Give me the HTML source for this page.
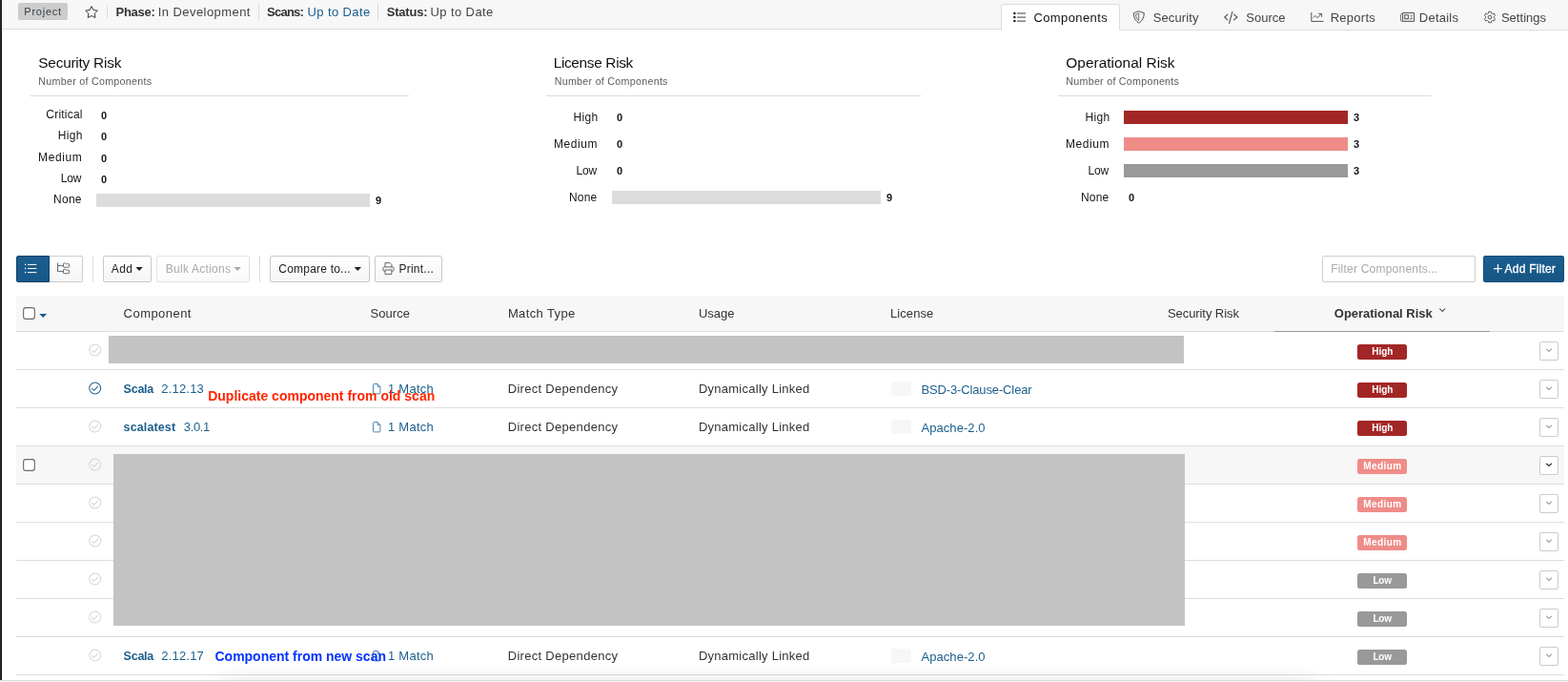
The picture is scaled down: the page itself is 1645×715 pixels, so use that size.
<!DOCTYPE html>
<html lang="en">
<head>
<meta charset="utf-8">
<title>Project Components</title>
<style>
html,body{margin:0;padding:0;}
html{width:1645px;height:715px;overflow:hidden;background:#fff;}
body{width:1645px;height:715px;overflow:hidden;background:#fff;position:relative;font-family:"Liberation Sans",sans-serif;font-size:13px;color:#333;}
div,span.t,svg,.g{position:absolute;box-sizing:border-box;}
.g{left:0;top:0;width:0;height:0;display:block;margin:0;padding:0;}
span.t{white-space:nowrap;line-height:20px;}
svg{overflow:visible;}
</style>
</head>
<body>
<div id="app" style="left:0;top:0;width:1645px;height:715px;overflow:hidden;will-change:transform;">
<aside class="g" aria-label="Navigation rail">
<div style="left:0px;top:0px;width:1px;height:713px;background:#222930;"></div>
<div style="left:1px;top:0px;width:1px;height:713px;background:#141a21;"></div>
</aside>
<div style="left:0px;top:713px;width:1645px;height:1px;background:#dcdcdc;"></div>
<div style="left:0px;top:714px;width:1645px;height:1px;background:#f5f5f5;"></div>
<header class="g" aria-label="Project version summary">
<div style="left:3px;top:0px;width:1642px;height:30px;background:#f7f7f7;"></div>
<div style="left:3px;top:30px;width:1047px;height:1px;background:#dddddd;"></div>
<div style="left:2px;top:30px;width:1px;height:1px;background:#f0f0f0;"></div>
<div style="left:3px;top:30px;width:1642px;height:1px;background:#f7f7f7;"></div>
<div style="left:3px;top:30px;width:1047px;height:1px;background:#dddddd;"></div>
<div style="left:2px;top:30px;width:1px;height:1px;background:#f0f0f0;"></div>
<div style="left:1050px;top:31px;width:125px;height:1px;background:#fff;"></div>
<div style="left:1175px;top:31px;width:470px;height:1px;background:#ddd;"></div>
<div style="left:1175px;top:30px;width:470px;height:1px;background:#f7f7f7;"></div>
<div style="left:1175px;top:31px;width:2px;height:1px;background:#e9e9e9;"></div>
<div style="left:1270px;top:31px;width:2px;height:1px;background:#e9e9e9;"></div>
<div style="left:1361px;top:31px;width:2px;height:1px;background:#e9e9e9;"></div>
<div style="left:1456px;top:31px;width:2px;height:1px;background:#e9e9e9;"></div>
<div style="left:1543px;top:31px;width:2px;height:1px;background:#e9e9e9;"></div>
<div style="left:1635px;top:31px;width:2px;height:1px;background:#e9e9e9;"></div>
<div style="left:19px;top:3px;width:52px;height:18px;background:#ccc;border-radius:2.5px;"></div>
<span class="t" style="left:25.3px;top:2px;font-size:11px;letter-spacing:0.77px;color:#353c44;">Project</span>
<svg style="left:89px;top:6px" width="15" height="15" viewBox="0 0 15 15"><path d="M7.10 0.60 L9.07 4.49 L13.38 5.16 L10.29 8.24 L10.98 12.54 L7.10 10.55 L3.22 12.54 L3.91 8.24 L0.82 5.16 L5.13 4.49 Z" fill="none" stroke="#3a3a3a" stroke-width="1" stroke-linejoin="round"/></svg>
<div style="left:112px;top:6px;width:1px;height:13px;background:#ddd;"></div>
<span class="t" style="left:121.6px;top:3px;font-size:13px;font-weight:700;letter-spacing:-0.3px;color:#333;">Phase:</span>
<span class="t" style="left:165.8px;top:3px;font-size:13px;letter-spacing:0.43px;color:#444;">In Development</span>
<div style="left:271px;top:3px;width:1px;height:19px;background:#ddd;"></div>
<span class="t" style="left:280px;top:3px;font-size:13px;font-weight:700;letter-spacing:-0.74px;color:#333;">Scans:</span>
<span class="t" style="left:322.5px;top:3px;font-size:13px;letter-spacing:0.4px;color:#1b5e8c;">Up to Date</span>
<div style="left:396px;top:3px;width:1px;height:19px;background:#ddd;"></div>
<span class="t" style="left:405.7px;top:3px;font-size:13px;font-weight:700;letter-spacing:-0.19px;color:#333;">Status:</span>
<span class="t" style="left:451.6px;top:3px;font-size:13px;letter-spacing:0.39px;color:#444;">Up to Date</span>
</header>
<nav class="g" aria-label="Project sections">
<div style="left:1050px;top:4px;width:125px;height:28px;background:#fff;border:1px solid #ddd;border-bottom:none;border-radius:3px 3px 0 0;"></div>
<span class="t" style="left:1084.4px;top:9px;font-size:13px;letter-spacing:0.4px;color:#111;">Components</span>
<span class="t" style="left:1209.7px;top:9px;font-size:13px;letter-spacing:0.12px;color:#444;">Security</span>
<span class="t" style="left:1307.3px;top:9px;font-size:13px;letter-spacing:0.01px;color:#444;">Source</span>
<span class="t" style="left:1395.7px;top:9px;font-size:13px;letter-spacing:0.26px;color:#444;">Reports</span>
<span class="t" style="left:1488.8px;top:9px;font-size:13px;letter-spacing:0.23px;color:#444;">Details</span>
<span class="t" style="left:1574.9px;top:9px;font-size:13px;letter-spacing:0.03px;color:#444;">Settings</span>
<svg style="left:1063px;top:12px" width="14" height="12" viewBox="0 0 14 12"><g fill="#1c1c1c"><circle cx="1.4" cy="2" r="1.25"/><circle cx="1.4" cy="6.1" r="1.25"/><circle cx="1.4" cy="10.1" r="1.25"/></g><g fill="#4d4d4d"><rect x="3.9" y="1.45" width="9.1" height="1.1"/><rect x="3.9" y="5.55" width="9.1" height="1.1"/><rect x="3.9" y="9.55" width="9.1" height="1.1"/></g></svg>
<svg style="left:1188px;top:11px" width="13" height="14" viewBox="0 0 13 14"><g transform="translate(0.3 0)"><path d="M6.5 0.8 L12 2.7 C12 7.6 10 11 6.5 13.1 C3 11 1 7.6 1 2.7 Z" fill="none" stroke="#555" stroke-width="1" stroke-linejoin="round"/><path d="M6.4 3.1 L3.2 4.3 C3.4 7 4.6 9.2 6.4 10.6 Z" fill="none" stroke="#555" stroke-width="0.85"/></g></svg>
<svg style="left:1284px;top:11px" width="15" height="14" viewBox="0 0 15 14"><path d="M3.9 4.1 L0.7 7 L3.9 9.9 M10.6 4.1 L13.9 7 L10.6 9.9 M8.9 1.3 L5.6 13.4" fill="none" stroke="#4a4a4a" stroke-width="1.05" stroke-linecap="round" stroke-linejoin="miter"/></svg>
<svg style="left:1375px;top:13px" width="14" height="10" viewBox="0 0 14 10"><g transform="translate(0.3 0)"><path d="M0.5 0 V9.4 H13.2" fill="none" stroke="#555" stroke-width="1"/><path d="M2.3 5.7 L4.5 3.5 L6.9 5.6 L10.4 2.2" fill="none" stroke="#555" stroke-width="1"/><path d="M7.9 1.4 H11.3 V4.8" fill="none" stroke="#555" stroke-width="1"/></g></svg>
<svg style="left:1469px;top:13px" width="15" height="10" viewBox="0 0 15 10"><path d="M2.6 1.6 H1.2 Q0.6 1.6 0.6 2.2 V8.4 Q0.6 9.4 1.6 9.4 H2.6" fill="none" stroke="#777" stroke-width="1"/><path d="M2.6 0.5 H14.5 V9.4 H2.6 Z" fill="none" stroke="#555" stroke-width="1" stroke-linejoin="round"/><rect x="4.7" y="2.7" width="3.7" height="3.9" fill="none" stroke="#555" stroke-width="1"/><path d="M10.2 3.7 H13 M10.2 6.4 H13" stroke="#777" stroke-width="1.1"/><path d="M4.2 8 H13" stroke="#c4c4c4" stroke-width="1"/></svg>
<svg style="left:1556px;top:11px" width="13" height="14" viewBox="0 0 13 14"><g transform="translate(0.5 0.3)"><path d="M8.06 2.64 L7.82 1.00 L5.18 1.00 L4.94 2.64 A4.35 4.35 0 0 0 3.76 3.32 L2.22 2.71 L0.91 4.99 L2.20 6.02 A4.35 4.35 0 0 0 2.20 7.38 L0.91 8.41 L2.22 10.69 L3.76 10.08 A4.35 4.35 0 0 0 4.94 10.76 L5.18 12.40 L7.82 12.40 L8.06 10.76 A4.35 4.35 0 0 0 9.24 10.08 L10.78 10.69 L12.09 8.41 L10.80 7.38 A4.35 4.35 0 0 0 10.80 6.02 L12.09 4.99 L10.78 2.71 L9.24 3.32 A4.35 4.35 0 0 0 8.06 2.64 Z" fill="none" stroke="#555" stroke-width="0.95" stroke-linejoin="round"/><circle cx="6.5" cy="6.7" r="1.9" fill="none" stroke="#555" stroke-width="0.95"/></g></svg>
</nav>
<main class="g">
<section class="g" aria-label="Security Risk">
<span class="t" style="left:40.3px;top:56px;font-size:15.4px;letter-spacing:-0.23px;color:#111;">Security Risk</span>
<span class="t" style="left:40.3px;top:75px;font-size:10.7px;letter-spacing:0.28px;color:#5c5c5c;">Number of Components</span>
<div style="left:32px;top:100px;width:397px;height:1px;background:#ddd;"></div>
<span class="t" style="left:48.3px;top:110px;font-size:12px;letter-spacing:0.21px;color:#151515;">Critical</span>
<span class="t" style="left:106px;top:111px;font-size:11px;font-weight:700;letter-spacing:0.3px;color:#151515;">0</span>
<span class="t" style="left:60.8px;top:132px;font-size:12px;letter-spacing:0.33px;color:#151515;">High</span>
<span class="t" style="left:106px;top:133px;font-size:11px;font-weight:700;letter-spacing:0.3px;color:#151515;">0</span>
<span class="t" style="left:40.1px;top:155px;font-size:12px;letter-spacing:0.6px;color:#151515;">Medium</span>
<span class="t" style="left:106px;top:156px;font-size:11px;font-weight:700;letter-spacing:0.3px;color:#151515;">0</span>
<span class="t" style="left:63.8px;top:177px;font-size:12px;letter-spacing:-0.17px;color:#151515;">Low</span>
<span class="t" style="left:106px;top:178px;font-size:11px;font-weight:700;letter-spacing:0.3px;color:#151515;">0</span>
<span class="t" style="left:56.1px;top:199px;font-size:12px;letter-spacing:0.23px;color:#151515;">None</span>
<div style="left:101px;top:203px;width:287px;height:14px;background:#dcdcdc;"></div>
<span class="t" style="left:394px;top:200px;font-size:11px;font-weight:700;letter-spacing:0.3px;color:#151515;">9</span>
</section>
<section class="g" aria-label="License Risk">
<span class="t" style="left:580.7px;top:56px;font-size:15.4px;letter-spacing:-0.33px;color:#111;">License Risk</span>
<span class="t" style="left:581.7px;top:75px;font-size:10.7px;letter-spacing:0.28px;color:#5c5c5c;">Number of Components</span>
<div style="left:573px;top:100px;width:393px;height:1px;background:#ddd;"></div>
<span class="t" style="left:601.6px;top:113px;font-size:12px;letter-spacing:0.33px;color:#151515;">High</span>
<span class="t" style="left:647px;top:113px;font-size:11px;font-weight:700;letter-spacing:0.3px;color:#151515;">0</span>
<span class="t" style="left:580.9px;top:141px;font-size:12px;letter-spacing:0.6px;color:#151515;">Medium</span>
<span class="t" style="left:647px;top:141px;font-size:11px;font-weight:700;letter-spacing:0.3px;color:#151515;">0</span>
<span class="t" style="left:604.6px;top:169px;font-size:12px;letter-spacing:-0.17px;color:#151515;">Low</span>
<span class="t" style="left:647px;top:169px;font-size:11px;font-weight:700;letter-spacing:0.3px;color:#151515;">0</span>
<span class="t" style="left:596.9px;top:197px;font-size:12px;letter-spacing:0.23px;color:#151515;">None</span>
<div style="left:642px;top:200px;width:282px;height:14px;background:#dcdcdc;"></div>
<span class="t" style="left:930px;top:197px;font-size:11px;font-weight:700;letter-spacing:0.3px;color:#151515;">9</span>
</section>
<section class="g" aria-label="Operational Risk">
<span class="t" style="left:1118.3px;top:56px;font-size:15.4px;letter-spacing:0.03px;color:#111;">Operational Risk</span>
<span class="t" style="left:1118.3px;top:75px;font-size:10.7px;letter-spacing:0.27px;color:#5c5c5c;">Number of Components</span>
<div style="left:1110px;top:100px;width:392px;height:1px;background:#ddd;"></div>
<span class="t" style="left:1138.6px;top:113px;font-size:12px;letter-spacing:0.33px;color:#151515;">High</span>
<div style="left:1179px;top:116px;width:235px;height:14px;background:#a32626;"></div>
<span class="t" style="left:1420px;top:113px;font-size:11px;font-weight:700;letter-spacing:0.3px;color:#151515;">3</span>
<span class="t" style="left:1117.9px;top:141px;font-size:12px;letter-spacing:0.6px;color:#151515;">Medium</span>
<div style="left:1179px;top:144px;width:235px;height:14px;background:#ef8c88;"></div>
<span class="t" style="left:1420px;top:141px;font-size:11px;font-weight:700;letter-spacing:0.3px;color:#151515;">3</span>
<span class="t" style="left:1141.6px;top:169px;font-size:12px;letter-spacing:-0.17px;color:#151515;">Low</span>
<div style="left:1179px;top:172px;width:235px;height:14px;background:#999;"></div>
<span class="t" style="left:1420px;top:169px;font-size:11px;font-weight:700;letter-spacing:0.3px;color:#151515;">3</span>
<span class="t" style="left:1133.9px;top:197px;font-size:12px;letter-spacing:0.23px;color:#151515;">None</span>
<span class="t" style="left:1184px;top:197px;font-size:11px;font-weight:700;letter-spacing:0.3px;color:#151515;">0</span>
</section>
<div class="g" role="toolbar" aria-label="Component actions">
<div style="left:17px;top:268px;width:35px;height:28px;background:linear-gradient(#1b5d8d,#175888);border:1px solid #0d3f66;border-radius:2px 0 0 2px;"></div>
<div style="left:52px;top:268px;width:35px;height:28px;border:1px solid #ccc;border-left:none;border-radius:0 2px 2px 0;background:linear-gradient(#fff,#f5f5f5);"></div>
<svg style="left:26px;top:276px" width="13" height="11" viewBox="0 0 13 11"><g fill="#fff"><rect x="0" y="0.7" width="1.3" height="1.3"/><rect x="0" y="4.8" width="1.3" height="1.3"/><rect x="0" y="8.9" width="1.3" height="1.3"/><rect x="3" y="0.9" width="9.4" height="1"/><rect x="3" y="5" width="9.4" height="1"/><rect x="3" y="9.1" width="9.4" height="1"/></g></svg>
<svg style="left:60px;top:275px" width="13" height="13" viewBox="0 0 13 13"><path d="M0.5 0.6 V9.6 H6 M0.5 3.6 H6" fill="none" stroke="#666" stroke-width="1"/><path d="M6.5 1.5 Q6.5 0.9 7.1 0.9 H8.6 L9.5 1.7 H11.9 Q12.5 1.7 12.5 2.3 V4.6 Q12.5 5.2 11.9 5.2 H7.1 Q6.5 5.2 6.5 4.6 Z" fill="#fff" stroke="#666" stroke-width="0.95"/><path d="M6.5 8 Q6.5 7.4 7.1 7.4 H8.6 L9.5 8.2 H11.9 Q12.5 8.2 12.5 8.8 V11.1 Q12.5 11.7 11.9 11.7 H7.1 Q6.5 11.7 6.5 11.1 Z" fill="#fff" stroke="#666" stroke-width="0.95"/></svg>
<div style="left:97px;top:268px;width:1px;height:28px;background:#ddd;"></div>
<div style="left:108px;top:268px;width:51px;height:28px;border:1px solid #c9c9c9;border-radius:2px;background:linear-gradient(#fff,#f5f5f5);"></div>
<span class="t" style="left:116.7px;top:272px;font-size:12px;letter-spacing:0.46px;color:#222;">Add</span>
<svg style="left:142px;top:280px" width="8" height="4" viewBox="0 0 8 4"><g transform="translate(0.4 0)"><path d="M0 0 H7.4 L3.7 4 Z" fill="#222"/></g></svg>
<div style="left:164px;top:268px;width:98px;height:28px;border:1px solid #e3e3e3;border-radius:2px;background:linear-gradient(#fff,#fafafa);"></div>
<span class="t" style="left:173.8px;top:272px;font-size:12px;letter-spacing:0.25px;color:#aaa;">Bulk Actions</span>
<svg style="left:245px;top:280px" width="8" height="4" viewBox="0 0 8 4"><g transform="translate(0.3 0)"><path d="M0 0 H7.6 L3.8 4 Z" fill="#aaa"/></g></svg>
<div style="left:272px;top:268px;width:1px;height:28px;background:#ddd;"></div>
<div style="left:283px;top:268px;width:105px;height:28px;border:1px solid #c9c9c9;border-radius:2px;background:linear-gradient(#fff,#f5f5f5);"></div>
<span class="t" style="left:292.3px;top:272px;font-size:12px;letter-spacing:0.21px;color:#222;">Compare to...</span>
<svg style="left:371px;top:280px" width="8" height="4" viewBox="0 0 8 4"><g transform="translate(0.6 0)"><path d="M0 0 H7.4 L3.7 4 Z" fill="#222"/></g></svg>
<div style="left:393px;top:268px;width:71px;height:28px;border:1px solid #c9c9c9;border-radius:2px;background:linear-gradient(#fff,#f5f5f5);"></div>
<svg style="left:401px;top:274px" width="13" height="14" viewBox="0 0 13 14"><g transform="translate(0 0.7)"><path d="M3 5.2 V0.9 H8 L9.9 2.8 V5.2" fill="none" stroke="#4a4a4a" stroke-width="0.85" stroke-linejoin="round"/><rect x="0.9" y="5.2" width="11.2" height="4.4" rx="1.4" fill="none" stroke="#4a4a4a" stroke-width="0.85"/><path d="M3 8.3 H9.9 V12.7 H3 Z" fill="#fcfcfc" stroke="#4a4a4a" stroke-width="0.85" stroke-linejoin="round"/><circle cx="10" cy="6.9" r="0.45" fill="#4a4a4a"/></g></svg>
<span class="t" style="left:418.4px;top:272px;font-size:12px;letter-spacing:0.25px;color:#222;">Print...</span>
<div style="left:1387px;top:268px;width:161px;height:28px;border:1px solid #ccc;border-radius:2px;background:#fff;"></div>
<span class="t" style="left:1396.2px;top:272px;font-size:12px;letter-spacing:0.22px;color:#aaa;">Filter Components...</span>
<div style="left:1556px;top:268px;width:85px;height:28px;background:linear-gradient(#1a5d8e,#165684);border:1px solid #124c78;border-radius:2px;"></div>
<svg style="left:1567px;top:277px" width="9" height="9" viewBox="0 0 9 9"><path d="M4.5 0 V9 M0 4.5 H9" stroke="#fff" stroke-width="1.25"/></svg>
<span class="t" style="left:1578.5px;top:272px;font-size:12px;letter-spacing:0.24px;color:#fff;-webkit-text-stroke:0.3px #fff;">Add Filter</span>
</div>
<div class="g" role="table" aria-label="Components">
<div class="g" role="row">
<div style="left:17px;top:310px;width:1624px;height:37px;background:#f7f7f7;"></div>
<div style="left:17px;top:347px;width:1624px;height:1px;background:#ddd;"></div>
<div style="left:1337px;top:347px;width:226px;height:1px;background:#999;"></div>
<svg style="left:24px;top:322px" width="13" height="13" viewBox="0 0 13 13"><rect x="0.65" y="0.65" width="11.7" height="11.7" rx="2.4" fill="#fff" stroke="#6a6a6a" stroke-width="1.15"/></svg>
<svg style="left:41px;top:329px" width="8" height="4" viewBox="0 0 8 4"><g transform="translate(0.3 0)"><path d="M0 0 H7.8 L3.9 4.1 Z" fill="#17598a"/></g></svg>
<span class="t" style="left:129.6px;top:319px;font-size:13px;letter-spacing:0.46px;color:#333;">Component</span>
<span class="t" style="left:388.6px;top:319px;font-size:13px;letter-spacing:0.03px;color:#333;">Source</span>
<span class="t" style="left:532.9px;top:319px;font-size:13px;letter-spacing:0.38px;color:#333;">Match Type</span>
<span class="t" style="left:732.9px;top:319px;font-size:13px;letter-spacing:-0.01px;color:#333;">Usage</span>
<span class="t" style="left:934px;top:319px;font-size:13px;letter-spacing:0.07px;color:#333;">License</span>
<span class="t" style="left:1225px;top:319px;font-size:13px;letter-spacing:-0.08px;color:#333;">Security Risk</span>
<span class="t" style="left:1399.8px;top:319px;font-size:13px;font-weight:700;letter-spacing:-0.03px;color:#333;">Operational Risk</span>
<svg style="left:1509px;top:322px" width="7" height="5" viewBox="0 0 7 5"><g transform="translate(0.8 0.8)"><path d="M0.5 0.7 L3.4 3.6 L6.3 0.7" fill="none" stroke="#444" stroke-width="1.05"/></g></svg>
</div>
<div class="g" role="row">
<div style="left:17px;top:387px;width:1624px;height:1px;background:#ddd;"></div>
<svg style="left:93px;top:360px" width="13" height="13" viewBox="0 0 13 13"><g transform="translate(0.2 0.5)"><circle cx="6.5" cy="6.5" r="5.95" fill="none" stroke="#d6d6d6" stroke-width="1.05"/><path d="M3.1 6.7 L5.4 8.8 L9.5 4.6" fill="none" stroke="#d6d6d6" stroke-width="1.15"/></g></svg>
<div style="left:1424px;top:361px;width:52px;height:16px;background:#a32626;border-radius:2.5px;"></div>
<span class="t" style="left:1439.2px;top:359px;font-size:10px;font-weight:700;color:#fff;">High</span>
<div style="left:1615px;top:358px;width:20px;height:20px;border:1px solid #ccc;border-radius:2px;background:#fff;"></div>
<svg style="left:1621px;top:365px" width="7" height="4" viewBox="0 0 7 4"><g transform="translate(0.6 0.4)"><path d="M0.6 0.5 L3.4 3.05 L6.2 0.5" fill="none" stroke="#6a6a6a" stroke-width="1"/></g></svg>
</div>
<div class="g" role="row">
<div style="left:17px;top:427px;width:1624px;height:1px;background:#ddd;"></div>
<svg style="left:93px;top:400px" width="13" height="13" viewBox="0 0 13 13"><g transform="translate(0.2 0.5)"><circle cx="6.5" cy="6.5" r="5.95" fill="none" stroke="#23638f" stroke-width="1.05"/><path d="M3.1 6.7 L5.4 8.8 L9.5 4.6" fill="none" stroke="#23638f" stroke-width="1.15"/></g></svg>
<span class="t" style="left:129.6px;top:398px;font-size:12.5px;font-weight:700;letter-spacing:-0.25px;color:#1b5e8c;">Scala</span>
<span class="t" style="left:169.3px;top:398px;font-size:13px;letter-spacing:0.19px;color:#1b5e8c;">2.12.13</span>
<svg style="left:391px;top:402px" width="9" height="12" viewBox="0 0 9 12"><path d="M1.6 0.5 H5.1 L7.9 3.3 V9.9 Q7.9 10.9 6.9 10.9 H1.6 Q0.5 10.9 0.5 9.9 V1.6 Q0.5 0.5 1.6 0.5 Z M5.1 0.7 V3.3 H7.7" fill="none" stroke="#4d84ad" stroke-width="1" stroke-linejoin="round"/></svg>
<span class="t" style="left:407px;top:398px;font-size:13px;letter-spacing:0.25px;color:#1b5e8c;">1 Match</span>
<span class="t" style="left:532.7px;top:398px;font-size:13px;letter-spacing:0.3px;color:#333;">Direct Dependency</span>
<span class="t" style="left:732.9px;top:398px;font-size:13px;letter-spacing:0.26px;color:#333;">Dynamically Linked</span>
<div style="left:935px;top:400px;width:21px;height:15px;background:#f7f7f7;border-radius:2px;"></div>
<span class="t" style="left:966.4px;top:399px;font-size:13px;letter-spacing:-0.13px;color:#1b5e8c;">BSD-3-Clause-Clear</span>
<div style="left:1424px;top:401px;width:52px;height:16px;background:#a32626;border-radius:2.5px;"></div>
<span class="t" style="left:1439.2px;top:399px;font-size:10px;font-weight:700;color:#fff;">High</span>
<div style="left:1615px;top:398px;width:20px;height:20px;border:1px solid #ccc;border-radius:2px;background:#fff;"></div>
<svg style="left:1621px;top:405px" width="7" height="4" viewBox="0 0 7 4"><g transform="translate(0.6 0.4)"><path d="M0.6 0.5 L3.4 3.05 L6.2 0.5" fill="none" stroke="#6a6a6a" stroke-width="1"/></g></svg>
</div>
<div class="g" role="row">
<div style="left:17px;top:467px;width:1624px;height:1px;background:#ddd;"></div>
<svg style="left:93px;top:440px" width="13" height="13" viewBox="0 0 13 13"><g transform="translate(0.2 0.5)"><circle cx="6.5" cy="6.5" r="5.95" fill="none" stroke="#d6d6d6" stroke-width="1.05"/><path d="M3.1 6.7 L5.4 8.8 L9.5 4.6" fill="none" stroke="#d6d6d6" stroke-width="1.15"/></g></svg>
<span class="t" style="left:129.6px;top:438px;font-size:12.5px;font-weight:700;letter-spacing:0.12px;color:#1b5e8c;">scalatest</span>
<span class="t" style="left:192.8px;top:438px;font-size:13px;letter-spacing:-0.35px;color:#1b5e8c;">3.0.1</span>
<svg style="left:391px;top:442px" width="9" height="12" viewBox="0 0 9 12"><path d="M1.6 0.5 H5.1 L7.9 3.3 V9.9 Q7.9 10.9 6.9 10.9 H1.6 Q0.5 10.9 0.5 9.9 V1.6 Q0.5 0.5 1.6 0.5 Z M5.1 0.7 V3.3 H7.7" fill="none" stroke="#4d84ad" stroke-width="1" stroke-linejoin="round"/></svg>
<span class="t" style="left:407px;top:438px;font-size:13px;letter-spacing:0.25px;color:#1b5e8c;">1 Match</span>
<span class="t" style="left:532.7px;top:438px;font-size:13px;letter-spacing:0.3px;color:#333;">Direct Dependency</span>
<span class="t" style="left:732.9px;top:438px;font-size:13px;letter-spacing:0.26px;color:#333;">Dynamically Linked</span>
<div style="left:935px;top:440px;width:21px;height:15px;background:#f7f7f7;border-radius:2px;"></div>
<span class="t" style="left:966.4px;top:439px;font-size:13px;letter-spacing:0.08px;color:#1b5e8c;">Apache-2.0</span>
<div style="left:1424px;top:441px;width:52px;height:16px;background:#a32626;border-radius:2.5px;"></div>
<span class="t" style="left:1439.2px;top:439px;font-size:10px;font-weight:700;color:#fff;">High</span>
<div style="left:1615px;top:438px;width:20px;height:20px;border:1px solid #ccc;border-radius:2px;background:#fff;"></div>
<svg style="left:1621px;top:445px" width="7" height="4" viewBox="0 0 7 4"><g transform="translate(0.6 0.4)"><path d="M0.6 0.5 L3.4 3.05 L6.2 0.5" fill="none" stroke="#6a6a6a" stroke-width="1"/></g></svg>
</div>
<div class="g" role="row">
<div style="left:17px;top:468px;width:1624px;height:39px;background:#f7f7f7;"></div>
<svg style="left:24px;top:481px" width="13" height="13" viewBox="0 0 13 13"><rect x="0.65" y="0.65" width="11.7" height="11.7" rx="2.4" fill="#fff" stroke="#6a6a6a" stroke-width="1.15"/></svg>
<div style="left:17px;top:507px;width:1624px;height:1px;background:#ddd;"></div>
<svg style="left:93px;top:480px" width="13" height="13" viewBox="0 0 13 13"><g transform="translate(0.2 0.5)"><circle cx="6.5" cy="6.5" r="5.95" fill="none" stroke="#d6d6d6" stroke-width="1.05"/><path d="M3.1 6.7 L5.4 8.8 L9.5 4.6" fill="none" stroke="#d6d6d6" stroke-width="1.15"/></g></svg>
<div style="left:1424px;top:481px;width:52px;height:16px;background:#ef8c88;border-radius:2.5px;"></div>
<span class="t" style="left:1430.3px;top:479px;font-size:10px;font-weight:700;letter-spacing:0.4px;color:#fff;">Medium</span>
<div style="left:1615px;top:478px;width:20px;height:20px;border:1px solid #ccc;border-radius:2px;background:#fff;"></div>
<svg style="left:1621px;top:485px" width="7" height="4" viewBox="0 0 7 4"><g transform="translate(0.6 0.4)"><path d="M0.6 0.5 L3.4 3.05 L6.2 0.5" fill="none" stroke="#222" stroke-width="1.2"/></g></svg>
</div>
<div class="g" role="row">
<div style="left:17px;top:547px;width:1624px;height:1px;background:#ddd;"></div>
<svg style="left:93px;top:520px" width="13" height="13" viewBox="0 0 13 13"><g transform="translate(0.2 0.5)"><circle cx="6.5" cy="6.5" r="5.95" fill="none" stroke="#d6d6d6" stroke-width="1.05"/><path d="M3.1 6.7 L5.4 8.8 L9.5 4.6" fill="none" stroke="#d6d6d6" stroke-width="1.15"/></g></svg>
<div style="left:1424px;top:521px;width:52px;height:16px;background:#ef8c88;border-radius:2.5px;"></div>
<span class="t" style="left:1430.3px;top:519px;font-size:10px;font-weight:700;letter-spacing:0.4px;color:#fff;">Medium</span>
<div style="left:1615px;top:518px;width:20px;height:20px;border:1px solid #ccc;border-radius:2px;background:#fff;"></div>
<svg style="left:1621px;top:525px" width="7" height="4" viewBox="0 0 7 4"><g transform="translate(0.6 0.4)"><path d="M0.6 0.5 L3.4 3.05 L6.2 0.5" fill="none" stroke="#6a6a6a" stroke-width="1"/></g></svg>
</div>
<div class="g" role="row">
<div style="left:17px;top:587px;width:1624px;height:1px;background:#ddd;"></div>
<svg style="left:93px;top:560px" width="13" height="13" viewBox="0 0 13 13"><g transform="translate(0.2 0.5)"><circle cx="6.5" cy="6.5" r="5.95" fill="none" stroke="#d6d6d6" stroke-width="1.05"/><path d="M3.1 6.7 L5.4 8.8 L9.5 4.6" fill="none" stroke="#d6d6d6" stroke-width="1.15"/></g></svg>
<div style="left:1424px;top:561px;width:52px;height:16px;background:#ef8c88;border-radius:2.5px;"></div>
<span class="t" style="left:1430.3px;top:559px;font-size:10px;font-weight:700;letter-spacing:0.4px;color:#fff;">Medium</span>
<div style="left:1615px;top:558px;width:20px;height:20px;border:1px solid #ccc;border-radius:2px;background:#fff;"></div>
<svg style="left:1621px;top:565px" width="7" height="4" viewBox="0 0 7 4"><g transform="translate(0.6 0.4)"><path d="M0.6 0.5 L3.4 3.05 L6.2 0.5" fill="none" stroke="#6a6a6a" stroke-width="1"/></g></svg>
</div>
<div class="g" role="row">
<div style="left:17px;top:627px;width:1624px;height:1px;background:#ddd;"></div>
<svg style="left:93px;top:600px" width="13" height="13" viewBox="0 0 13 13"><g transform="translate(0.2 0.5)"><circle cx="6.5" cy="6.5" r="5.95" fill="none" stroke="#d6d6d6" stroke-width="1.05"/><path d="M3.1 6.7 L5.4 8.8 L9.5 4.6" fill="none" stroke="#d6d6d6" stroke-width="1.15"/></g></svg>
<div style="left:1424px;top:601px;width:52px;height:16px;background:#999;border-radius:2.5px;"></div>
<span class="t" style="left:1440.5px;top:599px;font-size:10px;font-weight:700;letter-spacing:-0.26px;color:#fff;">Low</span>
<div style="left:1615px;top:598px;width:20px;height:20px;border:1px solid #ccc;border-radius:2px;background:#fff;"></div>
<svg style="left:1621px;top:605px" width="7" height="4" viewBox="0 0 7 4"><g transform="translate(0.6 0.4)"><path d="M0.6 0.5 L3.4 3.05 L6.2 0.5" fill="none" stroke="#6a6a6a" stroke-width="1"/></g></svg>
</div>
<div class="g" role="row">
<div style="left:17px;top:667px;width:1624px;height:1px;background:#ddd;"></div>
<svg style="left:93px;top:640px" width="13" height="13" viewBox="0 0 13 13"><g transform="translate(0.2 0.5)"><circle cx="6.5" cy="6.5" r="5.95" fill="none" stroke="#d6d6d6" stroke-width="1.05"/><path d="M3.1 6.7 L5.4 8.8 L9.5 4.6" fill="none" stroke="#d6d6d6" stroke-width="1.15"/></g></svg>
<div style="left:1424px;top:641px;width:52px;height:16px;background:#999;border-radius:2.5px;"></div>
<span class="t" style="left:1440.5px;top:639px;font-size:10px;font-weight:700;letter-spacing:-0.26px;color:#fff;">Low</span>
<div style="left:1615px;top:638px;width:20px;height:20px;border:1px solid #ccc;border-radius:2px;background:#fff;"></div>
<svg style="left:1621px;top:645px" width="7" height="4" viewBox="0 0 7 4"><g transform="translate(0.6 0.4)"><path d="M0.6 0.5 L3.4 3.05 L6.2 0.5" fill="none" stroke="#6a6a6a" stroke-width="1"/></g></svg>
</div>
<div class="g" role="row">
<div style="left:17px;top:707px;width:1624px;height:1px;background:#ddd;"></div>
<svg style="left:93px;top:680px" width="13" height="13" viewBox="0 0 13 13"><g transform="translate(0.2 0.5)"><circle cx="6.5" cy="6.5" r="5.95" fill="none" stroke="#d6d6d6" stroke-width="1.05"/><path d="M3.1 6.7 L5.4 8.8 L9.5 4.6" fill="none" stroke="#d6d6d6" stroke-width="1.15"/></g></svg>
<span class="t" style="left:129.6px;top:678px;font-size:12.5px;font-weight:700;letter-spacing:-0.25px;color:#1b5e8c;">Scala</span>
<span class="t" style="left:169.3px;top:678px;font-size:13px;letter-spacing:0.19px;color:#1b5e8c;">2.12.17</span>
<svg style="left:391px;top:682px" width="9" height="12" viewBox="0 0 9 12"><path d="M1.6 0.5 H5.1 L7.9 3.3 V9.9 Q7.9 10.9 6.9 10.9 H1.6 Q0.5 10.9 0.5 9.9 V1.6 Q0.5 0.5 1.6 0.5 Z M5.1 0.7 V3.3 H7.7" fill="none" stroke="#4d84ad" stroke-width="1" stroke-linejoin="round"/></svg>
<span class="t" style="left:407px;top:678px;font-size:13px;letter-spacing:0.25px;color:#1b5e8c;">1 Match</span>
<span class="t" style="left:532.7px;top:678px;font-size:13px;letter-spacing:0.3px;color:#333;">Direct Dependency</span>
<span class="t" style="left:732.9px;top:678px;font-size:13px;letter-spacing:0.26px;color:#333;">Dynamically Linked</span>
<div style="left:935px;top:680px;width:21px;height:15px;background:#f7f7f7;border-radius:2px;"></div>
<span class="t" style="left:966.4px;top:679px;font-size:13px;letter-spacing:0.08px;color:#1b5e8c;">Apache-2.0</span>
<div style="left:1424px;top:681px;width:52px;height:16px;background:#999;border-radius:2.5px;"></div>
<span class="t" style="left:1440.5px;top:679px;font-size:10px;font-weight:700;letter-spacing:-0.26px;color:#fff;">Low</span>
<div style="left:1615px;top:678px;width:20px;height:20px;border:1px solid #ccc;border-radius:2px;background:#fff;"></div>
<svg style="left:1621px;top:685px" width="7" height="4" viewBox="0 0 7 4"><g transform="translate(0.6 0.4)"><path d="M0.6 0.5 L3.4 3.05 L6.2 0.5" fill="none" stroke="#6a6a6a" stroke-width="1"/></g></svg>
</div>
</div>
<div class="g" aria-label="Screenshot annotations">
<div style="left:114px;top:352px;width:1128px;height:29px;background:#c3c3c3;"></div>
<div style="left:119px;top:476px;width:1124px;height:180px;background:#c3c3c3;"></div>
<span class="t" style="left:218.2px;top:405px;font-size:14px;font-weight:700;color:#ff2600;">Duplicate component from old scan</span>
<span class="t" style="left:225.5px;top:678px;font-size:14px;font-weight:700;letter-spacing:-0.01px;color:#0433ff;">Component from new scan</span>
</div>
</main>
<footer class="g">
<div style="left:230px;top:716px;width:1150px;height:30px;box-shadow:0 0 24px rgba(0,0,0,0.13);border-radius:12px;"></div>
<div style="left:0px;top:713px;width:1645px;height:1px;background:#dcdcdc;"></div>
<div style="left:0px;top:714px;width:1645px;height:1px;background:#f5f5f5;"></div>
</footer>
</div>
</body>
</html>
